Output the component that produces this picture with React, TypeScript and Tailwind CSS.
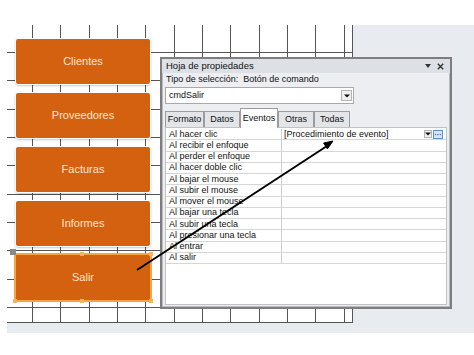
import React from "react";

const rows = [
  "Al hacer clic",
  "Al recibir el enfoque",
  "Al perder el enfoque",
  "Al hacer doble clic",
  "Al bajar el mouse",
  "Al subir el mouse",
  "Al mover el mouse",
  "Al bajar una tecla",
  "Al subir una tecla",
  "Al presionar una tecla",
  "Al entrar",
  "Al salir",
];

const tabs = [
  { label: "Formato", w: "w-[39px]" },
  { label: "Datos", w: "w-[36px]" },
  { label: "Eventos", w: "w-[38px]", active: true },
  { label: "Otras", w: "w-[36px]" },
  { label: "Todas", w: "w-[36px]" },
];

function DownTri() {
  return (
    <svg width="6" height="4" viewBox="0 0 6 4">
      <path d="M0 0.5 H6 L3 3.5 Z" fill="#111" />
    </svg>
  );
}

function FormButton({ label }: { label: string }) {
  return (
    <div className="w-[134px] h-[45px] shrink-0 bg-[#d4610f] rounded-[2px] ring-1 ring-white shadow-[0_1px_3px_rgba(0,0,0,0.45)] flex items-center justify-center text-[11px] text-[#fce6d5]">
      {label}
    </div>
  );
}

export default function App() {
  return (
    <div className="relative w-[474px] h-[355px] bg-white overflow-hidden pl-[7px] pt-[25px] font-['Liberation_Sans',Arial,sans-serif]">
      <div className="relative w-[467px] h-[308px] bg-[#e8ebef]">
        {/* design canvas */}
        <div className="w-[346px] h-[298px] bg-white bg-[image:repeating-linear-gradient(90deg,transparent_0_25px,#555555_25px_26px,transparent_26px_28.33px),repeating-linear-gradient(180deg,transparent_0_27px,#555555_27px_28px,transparent_28px_28.33px)] border-r border-b border-[#555555] flex flex-col gap-[9px] pl-[9px] pt-[14px]">
          <FormButton label="Clientes" />
          <FormButton label="Proveedores" />
          <FormButton label="Facturas" />
          <FormButton label="Informes" />
          <div className="relative w-[134px] h-[45px] shrink-0 bg-[#d4610f] outline-2 outline-[#f7a444] flex items-center justify-center text-[11px] text-[#fce6d5]">
            Salir
            <div className="absolute -left-[6px] -top-[6px] w-[6px] h-[6px] bg-[#8a8a8a]" />
            <div className="absolute left-[64px] -top-[3px] w-[4px] h-[4px] bg-[#f9b35e]" />
            <div className="absolute left-[64px] -bottom-[3px] w-[4px] h-[4px] bg-[#f9b35e]" />
            <div className="absolute -left-[3px] -bottom-[3px] w-[4px] h-[4px] bg-[#f9b35e]" />
            <div className="absolute -right-[3px] -bottom-[3px] w-[4px] h-[4px] bg-[#f9b35e]" />
            <div className="absolute -right-[3px] -top-[3px] w-[4px] h-[4px] bg-[#f9b35e]" />
          </div>
        </div>

        {/* property sheet */}
        <div className="absolute left-[153px] top-[32px] w-[292px] h-[252px] border-2 border-[#7e7e7e] shadow-[inset_0_0_0_1px_#b9bcc1] bg-[#eceef1] flex flex-col text-[9px] text-[#111]">
          <div className="h-[14px] shrink-0 bg-[#dde1e6] flex items-center justify-between pl-[4px] pr-[6px] text-[9.5px]">
            <span>Hoja de propiedades</span>
            <div className="flex items-center gap-[6px]">
              <svg width="6" height="4" viewBox="0 0 6 4">
                <path d="M0 0 H6 L3 4 Z" fill="#333" />
              </svg>
              <svg width="7" height="7" viewBox="0 0 7 7">
                <path d="M0.8 0.8 L6.2 6.2 M6.2 0.8 L0.8 6.2" stroke="#333" strokeWidth="1.4" />
              </svg>
            </div>
          </div>
          <div className="flex-1 flex flex-col px-[3px]">
            <div className="h-[13px] shrink-0 flex items-center pl-[1px] whitespace-pre">
              Tipo de selección:  Botón de comando
            </div>
            <div className="mt-[1px] h-[17px] w-[189px] shrink-0 border border-[#a9a9a9] bg-white flex items-center pl-[3px] pr-[1px]">
              <span className="flex-1">cmdSalir</span>
              <div className="w-[11px] h-[11px] border border-[#b5b5b5] bg-[#eef0f2] flex items-center justify-center">
                <DownTri />
              </div>
            </div>
            <div className="mt-[4px] h-[19px] shrink-0 flex items-end">
              {tabs.map((t) =>
                t.active ? (
                  <div
                    key={t.label}
                    className={`${t.w} h-[20px] -mb-px relative z-10 bg-white border border-b-0 border-[#9c9c9c] flex items-start justify-center pt-[3px]`}
                  >
                    {t.label}
                  </div>
                ) : (
                  <div
                    key={t.label}
                    className={`${t.w} h-[16px] bg-[#e3e5e9] border border-b-0 border-[#9c9c9c] flex items-center justify-center`}
                  >
                    {t.label}
                  </div>
                )
              )}
            </div>
            <div className="flex-1 mb-[2px] bg-white border border-[#c2c2c2] pt-px">
              {rows.map((r, i) => (
                <div key={r} className="h-[11.25px] flex border-b border-[#d6d6d6]">
                  <div className="w-[116px] border-r border-[#cfcfcf] pl-[3px] flex items-center leading-none">
                    {r}
                  </div>
                  <div className="flex-1 flex items-center pl-[2px] pr-[3px] leading-none">
                    {i === 0 && (
                      <>
                        <span className="flex-1">[Procedimiento de evento]</span>
                        <div className="w-[8px] h-[8px] border border-[#b5b5b5] bg-[#eef0f2] flex items-center justify-center mr-[1px]">
                          <DownTri />
                        </div>
                        <div className="w-[10px] h-[9px] border border-[#5b8fd0] bg-[#d5e6f8] flex items-center justify-center text-[7px] font-bold text-[#1e4e8c] leading-none">
                          ···
                        </div>
                      </>
                    )}
                  </div>
                </div>
              ))}
            </div>
          </div>
        </div>
      </div>

      {/* arrow overlay */}
      <svg className="absolute inset-0 pointer-events-none" width="474" height="355" viewBox="0 0 474 355">
        <line x1="137" y1="270" x2="327" y2="146" stroke="#000" strokeWidth="2" />
        <path d="M333 141 L327.4 148.9 L323.6 143 Z" fill="#000" stroke="#000" strokeWidth="1" strokeLinejoin="round" />
      </svg>
    </div>
  );
}
